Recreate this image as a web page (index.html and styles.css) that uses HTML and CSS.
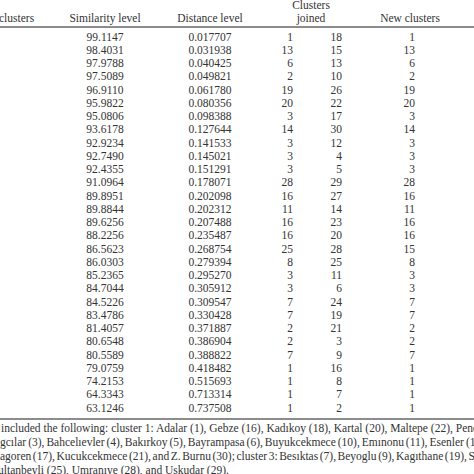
FILE: index.html
```html
<!DOCTYPE html>
<html>
<head>
<meta charset="utf-8">
<link rel="stylesheet" href="styles.css">
</head>
<body>
<div class="page">
<table class="tbl">
<colgroup>
<col class="c0"><col class="c1"><col class="c2"><col class="c3"><col class="c4"><col class="c5">
</colgroup>
<thead>
<tr>
<th class="h-first">clusters</th>
<th class="h-mid">Similarity level</th>
<th class="h-mid">Distance level</th>
<th class="h-join" colspan="2">Clusters<br>joined</th>
<th class="h-new">New clusters</th>
</tr>
</thead>
<tbody>
<tr class="r-first"><td></td><td class="num">99.1147</td><td class="num">0.017707</td><td class="a">1</td><td class="b">18</td><td class="n">1</td></tr>
<tr><td></td><td class="num">98.4031</td><td class="num">0.031938</td><td class="a">13</td><td class="b">15</td><td class="n">13</td></tr>
<tr><td></td><td class="num">97.9788</td><td class="num">0.040425</td><td class="a">6</td><td class="b">13</td><td class="n">6</td></tr>
<tr><td></td><td class="num">97.5089</td><td class="num">0.049821</td><td class="a">2</td><td class="b">10</td><td class="n">2</td></tr>
<tr><td></td><td class="num">96.9110</td><td class="num">0.061780</td><td class="a">19</td><td class="b">26</td><td class="n">19</td></tr>
<tr><td></td><td class="num">95.9822</td><td class="num">0.080356</td><td class="a">20</td><td class="b">22</td><td class="n">20</td></tr>
<tr><td></td><td class="num">95.0806</td><td class="num">0.098388</td><td class="a">3</td><td class="b">17</td><td class="n">3</td></tr>
<tr><td></td><td class="num">93.6178</td><td class="num">0.127644</td><td class="a">14</td><td class="b">30</td><td class="n">14</td></tr>
<tr><td></td><td class="num">92.9234</td><td class="num">0.141533</td><td class="a">3</td><td class="b">12</td><td class="n">3</td></tr>
<tr><td></td><td class="num">92.7490</td><td class="num">0.145021</td><td class="a">3</td><td class="b">4</td><td class="n">3</td></tr>
<tr><td></td><td class="num">92.4355</td><td class="num">0.151291</td><td class="a">3</td><td class="b">5</td><td class="n">3</td></tr>
<tr><td></td><td class="num">91.0964</td><td class="num">0.178071</td><td class="a">28</td><td class="b">29</td><td class="n">28</td></tr>
<tr><td></td><td class="num">89.8951</td><td class="num">0.202098</td><td class="a">16</td><td class="b">27</td><td class="n">16</td></tr>
<tr><td></td><td class="num">89.8844</td><td class="num">0.202312</td><td class="a">11</td><td class="b">14</td><td class="n">11</td></tr>
<tr><td></td><td class="num">89.6256</td><td class="num">0.207488</td><td class="a">16</td><td class="b">23</td><td class="n">16</td></tr>
<tr><td></td><td class="num">88.2256</td><td class="num">0.235487</td><td class="a">16</td><td class="b">20</td><td class="n">16</td></tr>
<tr><td></td><td class="num">86.5623</td><td class="num">0.268754</td><td class="a">25</td><td class="b">28</td><td class="n">15</td></tr>
<tr><td></td><td class="num">86.0303</td><td class="num">0.279394</td><td class="a">8</td><td class="b">25</td><td class="n">8</td></tr>
<tr><td></td><td class="num">85.2365</td><td class="num">0.295270</td><td class="a">3</td><td class="b">11</td><td class="n">3</td></tr>
<tr><td></td><td class="num">84.7044</td><td class="num">0.305912</td><td class="a">3</td><td class="b">6</td><td class="n">3</td></tr>
<tr><td></td><td class="num">84.5226</td><td class="num">0.309547</td><td class="a">7</td><td class="b">24</td><td class="n">7</td></tr>
<tr><td></td><td class="num">83.4786</td><td class="num">0.330428</td><td class="a">7</td><td class="b">19</td><td class="n">7</td></tr>
<tr><td></td><td class="num">81.4057</td><td class="num">0.371887</td><td class="a">2</td><td class="b">21</td><td class="n">2</td></tr>
<tr><td></td><td class="num">80.6548</td><td class="num">0.386904</td><td class="a">2</td><td class="b">3</td><td class="n">2</td></tr>
<tr><td></td><td class="num">80.5589</td><td class="num">0.388822</td><td class="a">7</td><td class="b">9</td><td class="n">7</td></tr>
<tr><td></td><td class="num">79.0759</td><td class="num">0.418482</td><td class="a">1</td><td class="b">16</td><td class="n">1</td></tr>
<tr><td></td><td class="num">74.2153</td><td class="num">0.515693</td><td class="a">1</td><td class="b">8</td><td class="n">1</td></tr>
<tr><td></td><td class="num">64.3343</td><td class="num">0.713314</td><td class="a">1</td><td class="b">7</td><td class="n">1</td></tr>
<tr class="r-last"><td></td><td class="num">63.1246</td><td class="num">0.737508</td><td class="a">1</td><td class="b">2</td><td class="n">1</td></tr>
</tbody>
</table>
<div class="notes">
<p class="note l1"> included the following: cluster 1: Adalar (1), Gebze (16), Kadıkoy (18), Kartal (20), Maltepe (22), Pendik (24)</p>
<p class="note l2">gcılar (3), Bahcelıevler (4), Bakırkoy (5), Bayrampasa (6), Buyukcekmece (10), Emınonu (11), Esenler (12)</p>
<p class="note l3">agoren (17), Kucukcekmece (21), and Z. Burnu (30); cluster 3: Besıktas (7), Beyoglu (9), Kagıthane (19), Sarıyer</p>
<p class="note l4">ultanbeyli (25), Umranıye (28), and Uskudar (29).</p>
</div>
</div>
</body>
</html>
```
FILE: styles.css
```css
html, body {
  margin: 0;
  padding: 0;
  background: #ffffff;
}
body {
  width: 474px;
  height: 474px;
  overflow: hidden;
  font-family: "Liberation Serif", "Times New Roman", serif;
  font-size: 11.5px;
  color: #333333;
}
.page {
  margin-top: -1.5px;
}
.tbl {
  border-collapse: collapse;
  table-layout: fixed;
  width: 474px;
}
.c0 { width: 50px; }
.c1 { width: 110px; }
.c2 { width: 100px; }
.c3 { width: 37px; }
.c4 { width: 49px; }
.c5 { width: 128px; }
.tbl th {
  font-weight: normal;
  line-height: 13px;
  padding: 0 0 1px 0;
  vertical-align: bottom;
  border-bottom: 2px solid #8c8c8c;
  white-space: nowrap;
}
.h-first {
  text-align: left;
  text-indent: -1px;
}
.h-mid { text-align: center; }
.h-join { text-align: center; padding-left: 16px !important; }
.h-new { text-align: center; }
.tbl td {
  padding: 0;
  line-height: 13.25px;
  white-space: nowrap;
}
.r-first td { padding-top: 3px; }
.r-last td {
  padding-bottom: 3px;
  border-bottom: 2px solid #8c8c8c;
}
.num { text-align: center; }
.a { text-align: right; padding-right: 4px !important; }
.b { text-align: right; padding-right: 4px !important; }
.n { text-align: right; padding-right: 59px !important; }
.notes {
  margin-top: 1.5px;
}
.note {
  margin: 0;
  line-height: 14px;
  white-space: nowrap;
  overflow: hidden;
}
.l1 { padding-left: 1px; }
.l2 { word-spacing: -0.9px; }
.l3 { word-spacing: -1.3px; }
.l4 { text-indent: -2px; }
```
